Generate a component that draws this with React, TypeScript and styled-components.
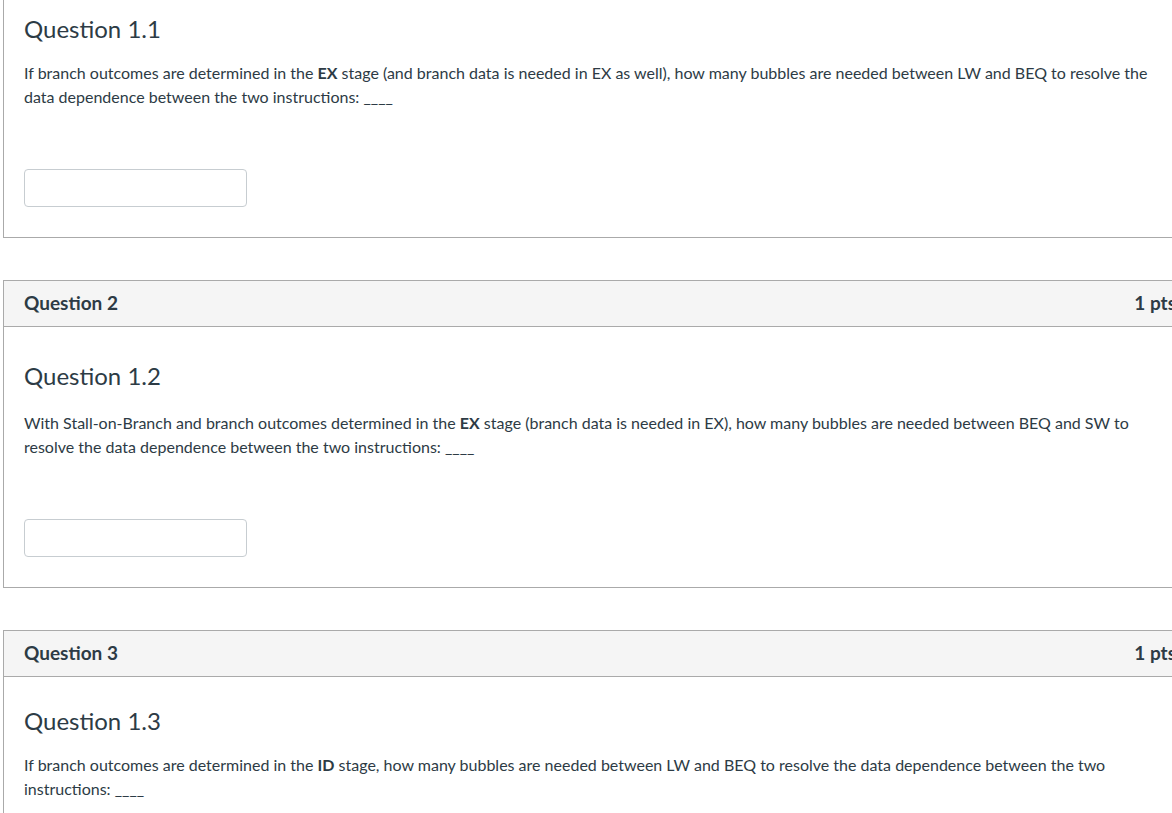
import { createGlobalStyle } from "styled-components"
import styled from "styled-components"

const GlobalStyle = createGlobalStyle`
  html, body {
    margin: 0;
    padding: 0;
    background: #fff;
    overflow: hidden;
  }
  body {
    font-family: Lato, "Liberation Sans", sans-serif;
    color: #2d3b45;
  }
`

interface QuestionData {
  number: number
  title: string
  loose?: boolean
  parts: Array<string | { bold: string }>
}

const questions: QuestionData[] = [
  {
    number: 1,
    title: "Question 1.1",
    parts: [
      "If branch outcomes are determined in the ",
      { bold: "EX" },
      " stage (and branch data is needed in EX as well), how many bubbles are needed between LW and BEQ to resolve the data dependence between the two instructions: ____",
    ],
  },
  {
    number: 2,
    title: "Question 1.2",
    loose: true,
    parts: [
      "With Stall-on-Branch and branch outcomes determined in the ",
      { bold: "EX" },
      " stage (branch data is needed in EX), how many bubbles are needed between BEQ and SW to resolve the data dependence between the two instructions: ____",
    ],
  },
  {
    number: 3,
    title: "Question 1.3",
    parts: [
      "If branch outcomes are determined in the ",
      { bold: "ID" },
      " stage, how many bubbles are needed between LW and BEQ to resolve the data dependence between the two instructions: ____",
    ],
  },
]

// page is scrolled so the first header sits above the fold
const Page = styled.div`
  margin-top: -62px;
  padding-left: 3px;
  display: flex;
  flex-direction: column;
  gap: 42px;
`

const Card = styled.div`
  width: 1192px;
  border: 1px solid #aaa;
  background: #fff;
`

const Header = styled.div`
  height: 42px;
  padding: 0 20px 3px;
  background: #f5f5f5;
  border-bottom: 1px solid #aaa;
  display: flex;
  align-items: center;
  justify-content: space-between;
`

const HeaderName = styled.span`
  font-size: 19px;
  font-weight: 700;
`

const Points = styled.span`
  font-size: 19px;
  font-weight: 700;
`

const Body = styled.div<{ $loose?: boolean }>`
  padding: ${p => p.$loose ? 31 : 26}px 20px 30px;
`

const Title = styled.h2<{ $loose?: boolean }>`
  margin: 0 0 ${p => p.$loose ? 17 : 14}px;
  font-size: 24px;
  font-weight: 400;
  line-height: 36px;
`

const Text = styled.p`
  margin: 0;
  font-size: 16px;
  line-height: 24px;
`

const Answer = styled.input`
  display: block;
  margin-top: 60px;
  width: 223px;
  height: 38px;
  box-sizing: border-box;
  border: 1px solid #c7cdd1;
  border-radius: 4px;
  font-family: inherit;
  font-size: 16px;
  padding: 0 8px;
  outline: none;
`

function Question({ q }: { q: QuestionData }) {
  return (
    <Card>
      <Header>
        <HeaderName>Question {q.number}</HeaderName>
        <Points>1 pts</Points>
      </Header>
      <Body $loose={q.loose}>
        <Title $loose={q.loose}>{q.title}</Title>
        <Text>
          {q.parts.map((p, i) => typeof p === "string" ? p : <b key={i}>{p.bold}</b>)}
        </Text>
        <Answer type="text" />
      </Body>
    </Card>
  )
}

export default function App() {
  return (
    <>
      <GlobalStyle />
      <Page>
        {questions.map(q => <Question key={q.number} q={q} />)}
      </Page>
    </>
  )
}
